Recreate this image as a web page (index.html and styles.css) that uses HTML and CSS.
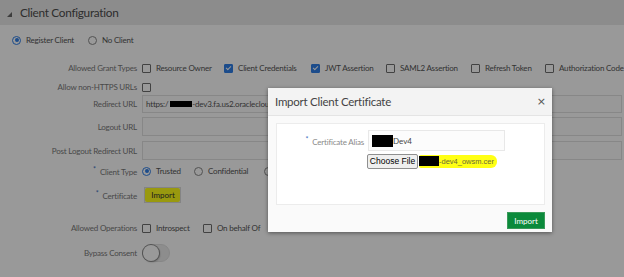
FILE: index.html
```html
<!DOCTYPE html>
<html>
<head>
<meta charset="utf-8">
<link rel="stylesheet" href="styles.css">
</head>
<body>
<div class="page">
  <div class="section-head">
    <span class="tri"></span>
    <span class="title">Client Configuration</span>
  </div>
  <div class="content">
    <div class="reg-row">
      <span class="radio on"></span><span class="val w-reg">Register Client</span>
      <span class="radio"></span><span class="val">No Client</span>
    </div>
    <div class="form">
      <div class="row r-grant">
        <div class="lbl">Allowed Grant Types</div>
        <div class="ctl">
          <span class="cb"></span><span class="val w-ro">Resource Owner</span>
          <span class="cb on"></span><span class="val w-cc">Client Credentials</span>
          <span class="cb on"></span><span class="val w-jwt">JWT Assertion</span>
          <span class="cb"></span><span class="val w-saml">SAML2 Assertion</span>
          <span class="cb"></span><span class="val w-rt">Refresh Token</span>
          <span class="cb"></span><span class="val">Authorization Code</span>
        </div>
      </div>
      <div class="row r-https">
        <div class="lbl">Allow non-HTTPS URLs</div>
        <div class="ctl"><span class="cb"></span></div>
      </div>
      <div class="row r-redirect">
        <div class="lbl">Redirect URL</div>
        <div class="ctl"><div class="input"><span class="val">https:/</span><span class="redact r1"></span><span class="val">-dev3.fa.us2.oraclecloud.com/oauth</span></div></div>
      </div>
      <div class="row r-logout">
        <div class="lbl">Logout URL</div>
        <div class="ctl"><div class="input"></div></div>
      </div>
      <div class="row r-post">
        <div class="lbl">Post Logout Redirect URL</div>
        <div class="ctl"><div class="input"></div></div>
      </div>
      <div class="row r-type">
        <div class="lbl"><span class="req">*</span>Client Type</div>
        <div class="ctl">
          <span class="radio on"></span><span class="val w-tr">Trusted</span>
          <span class="radio"></span><span class="val w-conf">Confidential</span>
          <span class="radio"></span><span class="val">Public</span>
        </div>
      </div>
      <div class="row r-cert">
        <div class="lbl"><span class="req">*</span>Certificate</div>
        <div class="ctl"><span class="btn-import"><span class="hl">Import</span></span></div>
      </div>
      <div class="row r-ops">
        <div class="lbl">Allowed Operations</div>
        <div class="ctl">
          <span class="cb"></span><span class="val w-intro">Introspect</span>
          <span class="cb"></span><span class="val">On behalf Of</span>
        </div>
      </div>
      <div class="row r-bypass">
        <div class="lbl">Bypass Consent</div>
        <div class="ctl"><span class="toggle"><span class="knob"></span></span></div>
      </div>
    </div>
  </div>
</div>
<div class="overlay"></div>
<div class="modal">
  <div class="modal-head">
    <span class="modal-title">Import Client Certificate</span>
    <span class="close">×</span>
  </div>
  <div class="modal-body">
    <div class="panel">
      <div class="m-row">
        <div class="m-lbl"><span class="req">*</span>Certificate Alias</div>
        <div class="alias-input"><span class="redact r2"></span><span class="alias-text">Dev4</span></div>
      </div>
      <div class="file-row">
        <span class="choose">Choose File</span>
        <span class="file-hl"><span class="redact r3"></span><span class="fname">-dev4_owsm.cer</span></span>
      </div>
    </div>
    <div class="m-foot"><span class="btn-green">Import</span></div>
  </div>
</div>
</body>
</html>
```

FILE: styles.css
```css
html, body {
  margin: 0;
  padding: 0;
}
body {
  width: 624px;
  height: 277px;
  overflow: hidden;
  position: relative;
  background: #ffffff;
  font-family: Lato, "Open Sans", sans-serif;
  color: #5e5e5e;
}
.page {
  width: 624px;
  height: 277px;
  background: #ffffff;
}
.section-head {
  height: 25px;
  background: #e9e9e9;
  display: flex;
  align-items: center;
  padding-left: 7px;
}
.tri {
  width: 0;
  height: 0;
  border-left: 5px solid transparent;
  border-bottom: 5px solid #666;
  margin-right: 8px;
  margin-top: 4px;
}
.title {
  font-size: 11.8px;
  color: #4d4d4d;
  letter-spacing: -0.3px;
}
.content {
  padding-top: 8px;
}
.val {
  font-size: 8px;
  letter-spacing: -0.2px;
  color: #555;
  white-space: nowrap;
  flex: none;
}
.reg-row {
  display: flex;
  align-items: center;
  height: 14px;
  padding-left: 12px;
}
.w-reg { width: 62px; }
.radio {
  width: 7px;
  height: 7px;
  border: 1px solid #8a8a8a;
  border-radius: 50%;
  background: #fff;
  margin-right: 5px;
  flex: none;
  box-sizing: content-box;
  position: relative;
}
.radio.on {
  border-color: #2f7fe8;
}
.radio.on::after {
  content: "";
  position: absolute;
  left: 1.5px;
  top: 1.5px;
  width: 4px;
  height: 4px;
  border-radius: 50%;
  background: #2f7fe8;
}
.form {
  display: flex;
  flex-direction: column;
}
.row {
  display: flex;
  align-items: center;
}
.lbl {
  width: 137px;
  flex: none;
  text-align: right;
  font-size: 8px;
  letter-spacing: -0.2px;
  color: #7a7a7a;
  white-space: nowrap;
}
.req {
  color: #3a6fc0;
  font-size: 7px;
  vertical-align: 3px;
  margin-right: 4px;
}
.ctl {
  display: flex;
  align-items: center;
  padding-left: 5px;
  flex: 1;
  min-width: 0;
}
.cb {
  width: 7px;
  height: 7px;
  border: 1px solid #6e6e6e;
  border-radius: 1px;
  background: #fff;
  margin-right: 5px;
  flex: none;
  position: relative;
}
.cb.on {
  background: #2f7fe8;
  border-color: #2f7fe8;
}
.cb.on::after {
  content: "";
  position: absolute;
  left: 2px;
  top: 0px;
  width: 2px;
  height: 4px;
  border-right: 1px solid #fff;
  border-bottom: 1px solid #fff;
  transform: rotate(45deg);
}
.w-ro { width: 68px; }
.w-cc { width: 73px; }
.w-jwt { width: 61px; }
.w-saml { width: 71px; }
.w-rt { width: 60px; }
.r-grant { height: 14px; margin-top: 14px; }
.r-https { height: 14px; margin-top: 5px; }
.r-redirect { height: 18px; margin-top: 1px; }
.r-logout { height: 19px; margin-top: 4px; }
.r-post { height: 19px; margin-top: 5px; }
.r-type { height: 14px; margin-top: 4px; }
.r-cert { height: 16px; margin-top: 9px; }
.r-ops { height: 14px; margin-top: 18px; }
.r-bypass { height: 18px; margin-top: 9px; }
.input {
  height: 18px;
  box-sizing: border-box;
  border: 1px solid #e2e2e2;
  background: #fdfdfd;
  width: 480px;
  display: flex;
  align-items: center;
  padding-left: 3px;
  overflow: hidden;
}
.r-logout .input, .r-post .input { height: 19px; }
.redact {
  display: inline-block;
  background: #000;
  flex: none;
}
.r1 { width: 22px; height: 6px; margin-left: 2px; }
.w-tr { width: 38px; }
.w-conf { width: 56px; }
.btn-import {
  display: inline-flex;
  align-items: center;
  justify-content: center;
  width: 37px;
  height: 16px;
  margin-left: 2px;
  box-sizing: border-box;
  border: 1px solid #dcdcdc;
  background: #f1f1f1;
}
.hl {
  background: #ffff1a;
  font-size: 8px;
  color: #333;
  padding: 2px 5px 2px 6px;
  border-radius: 2px;
}
.w-intro { width: 47px; }
.toggle {
  width: 28px;
  height: 18px;
  border-radius: 9px;
  background: #ececec;
  border: 1px solid #e0e0e0;
  box-sizing: border-box;
  position: relative;
  display: inline-block;
}
.knob {
  position: absolute;
  left: 0;
  top: 0;
  width: 16px;
  height: 16px;
  border-radius: 50%;
  background: #fff;
  box-shadow: 0 0 0 1px #8a8a8a, 1px 1px 2px rgba(0,0,0,0.3);
}
.overlay {
  position: absolute;
  left: 0;
  top: 0;
  width: 624px;
  height: 277px;
  background: rgba(0, 0, 0, 0.4);
}
.modal {
  position: absolute;
  left: 268px;
  top: 88px;
  width: 284px;
  height: 144px;
  background: #fafafa;
  box-shadow: 0 1px 4px rgba(0,0,0,0.45);
  display: flex;
  flex-direction: column;
}
.modal-head {
  height: 27px;
  background: #f3f3f3;
  border-bottom: 1px solid #e4e4e4;
  display: flex;
  align-items: center;
  justify-content: space-between;
  padding: 0 6px 0 7px;
  flex: none;
}
.modal-title {
  font-size: 11.5px;
  color: #444;
  letter-spacing: -0.25px;
}
.close {
  font-size: 11px;
  color: #555;
  font-family: "DejaVu Sans", sans-serif;
}
.modal-body {
  flex: 1;
  display: flex;
  flex-direction: column;
  padding: 7px 7px 0 8px;
}
.panel {
  height: 82px;
  background: #fff;
  border: 1px solid #ececec;
  box-sizing: border-box;
  padding-top: 6px;
}
.m-row {
  display: flex;
  align-items: center;
  height: 21px;
}
.m-lbl {
  width: 87px;
  text-align: right;
  font-size: 8px;
  letter-spacing: -0.2px;
  color: #8a8a8a;
  white-space: nowrap;
  flex: none;
}
.alias-input {
  margin-left: 4px;
  width: 137px;
  height: 21px;
  box-sizing: border-box;
  border: 1px solid #e8e8e8;
  background: #fcfcfc;
  display: flex;
  align-items: center;
  padding-left: 3px;
}
.r2 { width: 21px; height: 12px; }
.alias-text {
  font-size: 8px;
  color: #444;
}
.file-row {
  display: flex;
  align-items: center;
  margin-left: 90px;
  margin-top: 2px;
  height: 16px;
}
.choose {
  font-family: "Liberation Sans", Arial, sans-serif;
  font-size: 8.5px;
  white-space: nowrap;
  color: #000;
  background: #efefef;
  border: 1px solid #8f8f8f;
  border-radius: 2px;
  height: 15px;
  box-sizing: border-box;
  width: 51px;
  display: inline-flex;
  align-items: center;
  justify-content: center;
  flex: none;
}
.file-hl {
  display: inline-flex;
  align-items: center;
  background: #ffff14;
  height: 13px;
  padding-right: 3px;
  border-radius: 2px 6px 6px 2px;
  margin-left: 1px;
}
.r3 { width: 20px; height: 10px; }
.fname {
  font-family: "Liberation Sans", Arial, sans-serif;
  font-size: 7.5px;
  white-space: nowrap;
  color: #6b6b3a;
}
.m-foot {
  display: flex;
  justify-content: flex-end;
  padding-top: 7px;
}
.btn-green {
  width: 38px;
  height: 17px;
  background: #0b8a3b;
  color: #fff;
  font-size: 8px;
  display: inline-flex;
  align-items: center;
  justify-content: center;
  border: 1px solid #3a9a5a;
  box-sizing: border-box;
}
```
